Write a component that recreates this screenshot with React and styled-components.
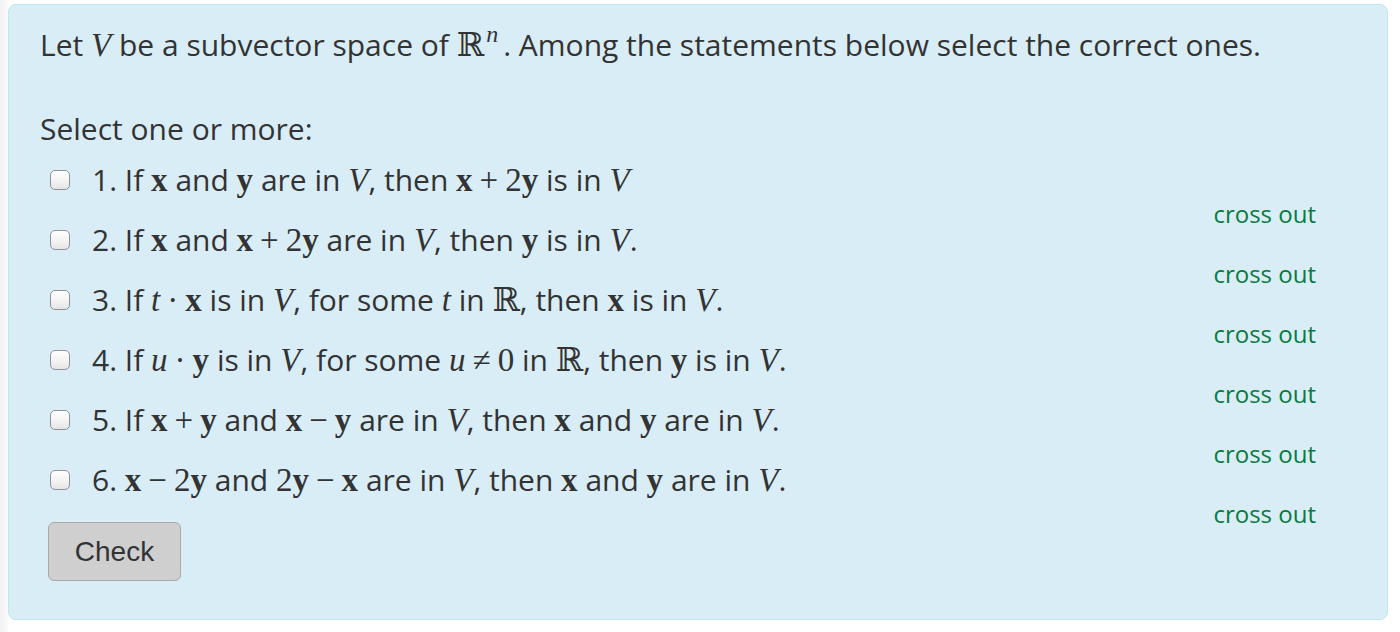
import React from "react";
import styled, { createGlobalStyle } from "styled-components";

const GlobalStyle = createGlobalStyle`
  html, body {
    margin: 0;
    padding: 0;
    background: #ffffff;
  }
  body {
    font-family: "Open Sans", "Liberation Sans", sans-serif;
    color: #333333;
  }
`;

const Page = styled.div`
  padding: 4px 12px 0 8px;
  background: linear-gradient(to right, #f2f2f2 0, #fafafa 8px, #ffffff 8px);
  min-height: 632px;
  box-sizing: border-box;
`;

const Panel = styled.div`
  background: #d9edf7;
  border: 1px solid #bce8f1;
  border-radius: 8px;
  padding: 21px 31px 38px 31px;
`;

const Heading = styled.div`
  font-size: 30px;
  line-height: 38px;
  white-space: nowrap;
`;

const Prompt = styled.div`
  font-size: 30px;
  line-height: 38px;
  margin-top: 46px;
  margin-bottom: 2px;
`;

const List = styled.div`
  display: flex;
  flex-direction: column;
`;

const Row = styled.div`
  height: 60px;
  display: flex;
  justify-content: space-between;
  align-items: flex-start;
  padding-left: 10px;
`;

const Label = styled.label`
  display: flex;
  align-items: center;
  gap: 22px;
  font-size: 30px;
  line-height: 60px;
  white-space: nowrap;
`;

const Box = styled.span`
  width: 18px;
  height: 18px;
  border: 1px solid #8d9396;
  border-radius: 5px;
  background: linear-gradient(to bottom, #ffffff 0%, #f4f4f4 50%, #e6e6e6 100%);
  box-shadow: inset 0 1px 0 #fff;
  flex: none;
`;

const CrossOut = styled.a`
  font-size: 24px;
  line-height: 24px;
  margin-top: 52px;
  margin-right: 40px;
  color: #0a7a3e;
  text-decoration: none;
  cursor: pointer;
`;

const Math = styled.span`
  font-family: "Liberation Serif", "DejaVu Serif", serif;
  font-size: 1.1em;
  font-style: ${({ $it }) => ($it ? "italic" : "normal")};
  font-weight: ${({ $bf }) => ($bf ? 700 : 400)};
  padding: ${({ $op }) => ($op ? "0 7px" : "0")};
`;

const Sup = styled.sup`
  font-family: "Liberation Serif", serif;
  font-style: italic;
  font-size: 0.8em;
  vertical-align: 0.6em;
  line-height: 0;
  padding: 0 5px 0 2px;
`;

const Button = styled.button`
  margin-top: 12px;
  margin-left: 8px;
  width: 133px;
  height: 59px;
  background: #cfcfcf;
  border: 1px solid #a9a9a9;
  border-radius: 6px;
  font-family: "Liberation Sans", Arial, sans-serif;
  font-size: 28px;
  color: #333;
  cursor: pointer;
`;

const V = () => <Math $it>V</Math>;
const X = () => <Math $bf>x</Math>;
const Y = () => <Math $bf>y</Math>;
const Op = ({ c }) => <Math $op>{c}</Math>;
const R = () => <Math>ℝ</Math>;

const items = [
  <>1. If <X /> and <Y /> are in <V />, then <X /><Op c="+" /><Math>2</Math><Y /> is in <V /></>,
  <>2. If <X /> and <X /><Op c="+" /><Math>2</Math><Y /> are in <V />, then <Y /> is in <V />.</>,
  <>3. If <Math $it>t</Math><Op c="·" /><X /> is in <V />, for some <Math $it>t</Math> in <R />, then <X /> is in <V />.</>,
  <>4. If <Math $it>u</Math><Op c="·" /><Y /> is in <V />, for some <Math $it>u</Math><Op c="≠" /><Math>0</Math> in <R />, then <Y /> is in <V />.</>,
  <>5. If <X /><Op c="+" /><Y /> and <X /><Op c="−" /><Y /> are in <V />, then <X /> and <Y /> are in <V />.</>,
  <>6. <X /><Op c="−" /><Math>2</Math><Y /> and <Math>2</Math><Y /><Op c="−" /><X /> are in <V />, then <X /> and <Y /> are in <V />.</>,
];

export default function App() {
  return (
    <>
      <GlobalStyle />
      <Page>
        <Panel>
          <Heading>
            Let <V /> be a subvector space of <R /><Sup>n</Sup>. Among the statements below select the correct ones.
          </Heading>
          <Prompt>Select one or more:</Prompt>
          <List>
            {items.map((content, i) => (
              <Row key={i}>
                <Label>
                  <Box />
                  <span>{content}</span>
                </Label>
                <CrossOut>cross out</CrossOut>
              </Row>
            ))}
          </List>
          <Button>Check</Button>
        </Panel>
      </Page>
    </>
  );
}
